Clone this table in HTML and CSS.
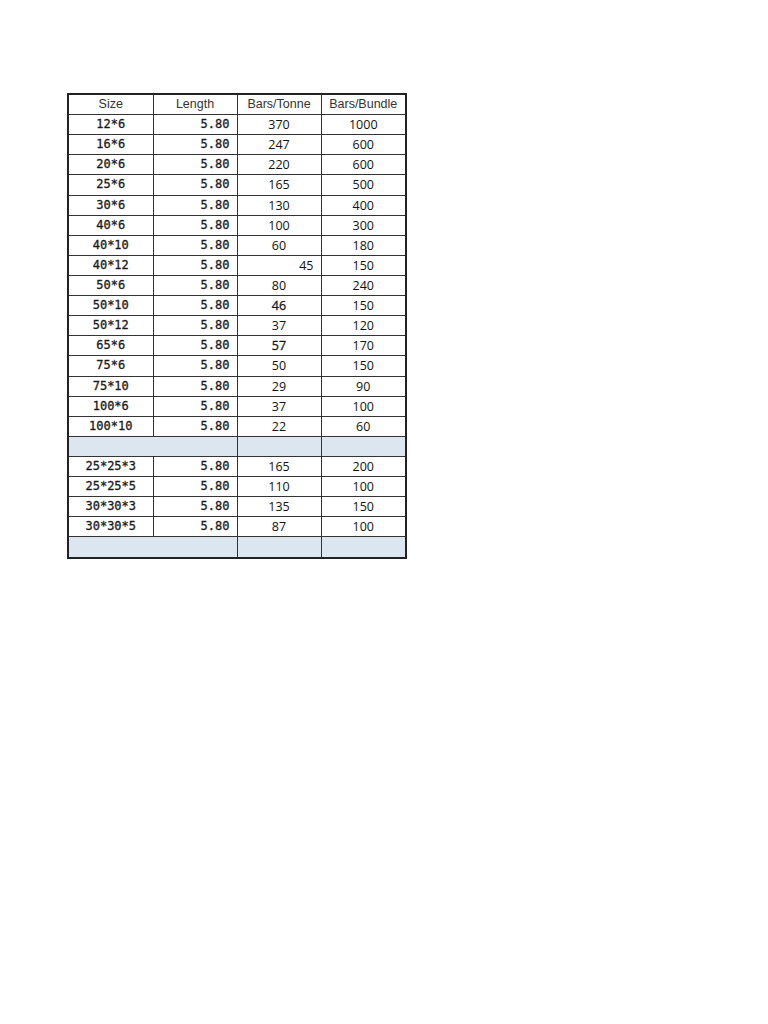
FILE: index.html
```html
<!DOCTYPE html>
<html>
<head>
<meta charset="utf-8">
<link rel="stylesheet" href="styles.css">
</head>
<body>
<table class="sheet">
  <colgroup><col class="c1"><col class="c2"><col class="c3"><col class="c4"></colgroup>
  <thead>
    <tr class="head"><th>Size</th><th>Length</th><th>Bars/Tonne</th><th>Bars/Bundle</th></tr>
  </thead>
  <tbody>
    <tr><td class="size">12*6</td><td class="len">5.80</td><td class="num">370</td><td class="num">1000</td></tr>
    <tr><td class="size">16*6</td><td class="len">5.80</td><td class="num">247</td><td class="num">600</td></tr>
    <tr><td class="size">20*6</td><td class="len">5.80</td><td class="num">220</td><td class="num">600</td></tr>
    <tr><td class="size">25*6</td><td class="len">5.80</td><td class="num">165</td><td class="num">500</td></tr>
    <tr><td class="size">30*6</td><td class="len">5.80</td><td class="num">130</td><td class="num">400</td></tr>
    <tr><td class="size">40*6</td><td class="len">5.80</td><td class="num">100</td><td class="num">300</td></tr>
    <tr><td class="size">40*10</td><td class="len">5.80</td><td class="num">60</td><td class="num">180</td></tr>
    <tr><td class="size">40*12</td><td class="len">5.80</td><td class="num right">45</td><td class="num">150</td></tr>
    <tr><td class="size">50*6</td><td class="len">5.80</td><td class="num">80</td><td class="num">240</td></tr>
    <tr><td class="size">50*10</td><td class="len">5.80</td><td class="num mono">46</td><td class="num">150</td></tr>
    <tr><td class="size">50*12</td><td class="len">5.80</td><td class="num">37</td><td class="num">120</td></tr>
    <tr><td class="size">65*6</td><td class="len">5.80</td><td class="num mono">57</td><td class="num">170</td></tr>
    <tr><td class="size">75*6</td><td class="len">5.80</td><td class="num">50</td><td class="num">150</td></tr>
    <tr><td class="size">75*10</td><td class="len">5.80</td><td class="num">29</td><td class="num">90</td></tr>
    <tr><td class="size">100*6</td><td class="len">5.80</td><td class="num">37</td><td class="num">100</td></tr>
    <tr><td class="size">100*10</td><td class="len">5.80</td><td class="num">22</td><td class="num">60</td></tr>
    <tr class="blank"><td colspan="2"></td><td></td><td></td></tr>
    <tr><td class="size">25*25*3</td><td class="len">5.80</td><td class="num">165</td><td class="num">200</td></tr>
    <tr><td class="size">25*25*5</td><td class="len">5.80</td><td class="num">110</td><td class="num">100</td></tr>
    <tr><td class="size">30*30*3</td><td class="len">5.80</td><td class="num">135</td><td class="num">150</td></tr>
    <tr><td class="size">30*30*5</td><td class="len">5.80</td><td class="num">87</td><td class="num">100</td></tr>
    <tr class="blank"><td colspan="2"></td><td></td><td></td></tr>
  </tbody>
</table>
</body>
</html>
```
FILE: styles.css
```css
html, body {
  margin: 0;
  padding: 0;
  background: #ffffff;
}
.sheet {
  border-collapse: collapse;
  margin: 93px 0 0 67px;
  table-layout: fixed;
  width: 340px;
  border: 2px solid #222;
}
.c1 { width: 85px; }
.c2 { width: 84px; }
.c3 { width: 84px; }
.c4 { width: 85px; }
.sheet th, .sheet td {
  border: 1px solid #333;
  height: 19.12px;
  padding: 0 7px;
  line-height: 19px;
  white-space: nowrap;
  overflow: hidden;
}
.sheet th {
  font-family: "Liberation Sans", Arial, sans-serif;
  font-weight: normal;
  font-size: 12.5px;
  color: #333;
  text-align: center;
}
.size, .len, .mono {
  font-family: "DejaVu Sans Mono", monospace;
  font-size: 12px;
  font-weight: normal;
  color: #1a1a1a;
  -webkit-text-stroke: 0.3px #1a1a1a;
}
.size { text-align: center; }
.len { text-align: right; }
.num {
  font-family: "Open Sans", "Liberation Sans", sans-serif;
  font-size: 12.5px;
  color: #111;
  text-align: center;
}
.num.right { text-align: right; }
.blank td {
  background: #dce6f1;
}
```
